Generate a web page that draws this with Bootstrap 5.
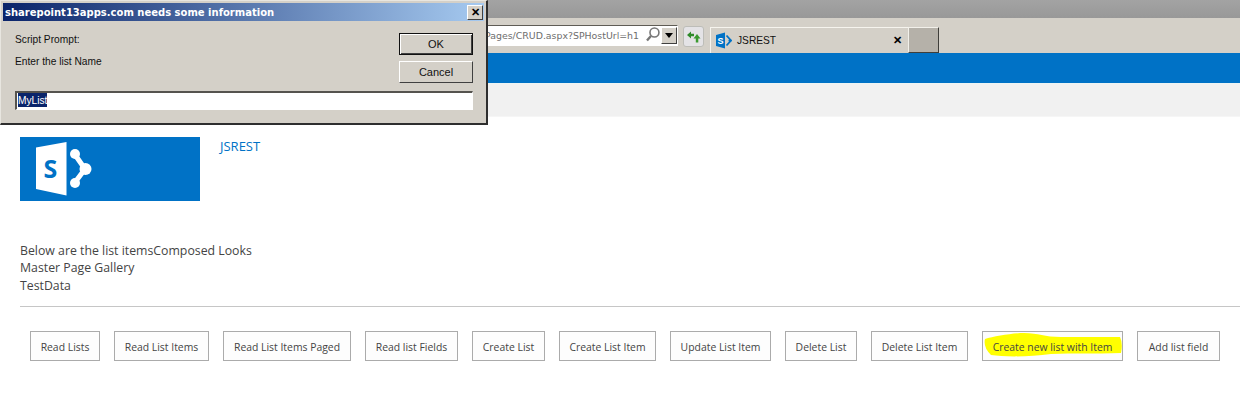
<!DOCTYPE html>
<html lang="en"><head><meta charset="utf-8"><title>JSREST</title>
<link href="https://cdn.jsdelivr.net/npm/bootstrap@5.3.0/dist/css/bootstrap.min.css" rel="stylesheet">
<style>
html,body{height:412px;overflow:hidden}
body{background:#fff;font-family:"Open Sans","Liberation Sans",sans-serif;color:#444;position:relative}
.chrome-top{height:18px;background:linear-gradient(#a3a3a3,#989898)}
.chrome-bar{height:35px;background:#d4d0c8;padding-left:400px;font-family:"Liberation Sans",sans-serif}
.addr{width:278px;height:21px;margin-top:7px;background:#fff;border:1px solid;border-color:#5f5c55 #fff #fff #5f5c55;color:#6d6d6d;padding-left:84px;white-space:nowrap}
.addr-text{width:161px;line-height:19px;font-family:"DejaVu Sans",sans-serif;font-size:9.400px}
.addr-drop{width:16px;height:17px;margin-left:auto;margin-top:1px;background:#d4d0c8;border:1px solid;border-color:#fff #404040 #404040 #fff}
.refresh{width:21px;height:21px;margin:8px 6px 0 5px;background:#e4e3e6;border:1px solid #bdbdb8;border-radius:3px}
.ietab{width:198px;height:26px;margin-top:9px;border-top:1px solid #f6f4ee;border-left:1px solid #f6f4ee;font-size:10.200px;color:#111;padding:0 5px 0 4px}
.ietab-x{font-weight:700;font-size:11px;line-height:1;margin-left:auto;margin-right:1px;color:#000}
.ietab-new{width:31px;height:26px;margin:9px 0 0 0;background:#b5b1a9;border:1px solid;border-color:#f2f0ea #3f3e3a #3f3e3a #f2f0ea}
.fav{margin-right:5px;flex:none}
.sp-blue{height:30px;background:#0072c6}
.sp-gray{height:34px;background:#f1f1f1;border-top:1px solid #ecf4f4;border-bottom:1px solid #f6f6f6}
.sp-head{padding:20px 0 0 20px;gap:20px}
.sp-logo{display:block;width:180px;height:64px;background:#0072c6}
.sp-title{font-size:13px;color:#0072c6;text-decoration:none;line-height:18px;display:block;height:18px}
.sp-list{margin:40.800px 0 0 20px;font-size:12.300px;line-height:17.500px;color:#444}
.sp-rule{margin:11.700px 0 0 20px;border:0;border-top:1px solid #c6c6c6;opacity:1}
.sp-actions{gap:14px;padding:24px 0 0 30px}
.sp-btn{border:1px solid #ababab;border-radius:0;background:#fdfdfd;color:#444;font-size:10.400px;line-height:14px;height:30px;padding:2px 0 0;font-family:"Open Sans",sans-serif;position:relative;white-space:nowrap;flex:none}
.w70{width:70px}.w95{width:95px}.w128{width:128px}.w93{width:93px}.w73{width:73px}.w97{width:97px}.w101{width:101px}.w72{width:72px}.w141{width:141px}.w83{width:83px}
.btn-label{position:relative}
.marker{position:absolute;left:1px;top:1px;width:139px;height:24px}
.ie-dialog{position:absolute;left:0;top:0;width:488px;height:125px;background:#d4d0c8;border:1px solid;border-color:#e8e6e0 #2e2e2e #2e2e2e #e8e6e0;border-width:1px 2px 2px 1px;font-family:"Liberation Sans",sans-serif;font-size:10.200px;color:#111}
.ie-title{height:18px;margin:2px 2px 0 2px;background:linear-gradient(90deg,#0a246a,#a6caf0);color:#fff;font:700 10px/19px "DejaVu Sans",sans-serif;padding-left:2px;white-space:nowrap}
.ie-close{width:16px;height:15px;margin:2px 1px 0 auto;background:#d4d0c8;border:1px solid;border-color:#fff #404040 #404040 #fff;color:#000;font:700 11px/12px "Liberation Sans",sans-serif;text-align:center}
.ie-body{padding:0 13px 0 14px}
.ie-labels{padding-top:8px;line-height:22px;width:384px;height:70px}
.ie-btns{gap:6px;padding-top:12px}
.ie-btn{width:74px;height:22px;padding:0;border-radius:0;background:#d4d0c8;color:#111;font-size:11px;line-height:18px;border:1px solid;border-color:#fff #404040 #404040 #fff}
.ie-btn-def{border-color:#111;box-shadow:inset 1px 1px #fff,inset -1px -1px #404040}
.ie-input{height:19px;border:1px solid;border-color:#55534e #fff #fff #55534e;background:#fff;border-top-width:2px;border-left-width:2px;padding-left:1px;line-height:13px}
.ie-sel{background:#0a246a;color:#fff;display:inline-block;line-height:13px;padding-top:1px}
</style></head>
<body>
<div class="chrome-top"></div>
<div class="chrome-bar d-flex align-items-start">
  <div class="addr d-flex"><span class="addr-text">Pages/CRUD.aspx?SPHostUrl=h1</span>
    <svg width="16" height="16" viewBox="0 0 16 16"><circle cx="9.500" cy="6.500" r="4.500" fill="none" stroke="#777" stroke-width="1.600"/><path d="M6 10L2 14.500" stroke="#777" stroke-width="2.400"/></svg>
    <span class="addr-drop d-flex align-items-center justify-content-center"><svg width="8" height="5" viewBox="0 0 8 5"><path d="M0 0h8L4 5z" fill="#000"/></svg></span>
  </div>
  <div class="refresh d-flex align-items-center justify-content-center"><svg width="19" height="19" viewBox="0 0 19 19"><path d="M3 8L7 4.500V6.800H10V9.200H7V11.500z" fill="#2f8a2a"/><path d="M13 7L16.500 11.500H14.300V15.500H11.800V11.500H9.500z" fill="#3a9a30"/></svg></div>
  <div class="ietab d-flex align-items-center">
    <svg width="17" height="17" viewBox="0 0 17 17" class="fav"><path d="M1 3l9-2.500v16L1 14z" fill="#0072c6"/><text x="5.500" y="11.500" font-family="Liberation Sans" font-weight="700" font-size="9" fill="#fff" text-anchor="middle">S</text><path d="M11.500 3.500l4.500 5-4.500 5" fill="none" stroke="#0072c6" stroke-width="1.800"/><circle cx="15" cy="8.500" r="1.500" fill="#0072c6"/></svg>
    <span>JSREST</span><span class="ietab-x">✕</span>
  </div>
  <div class="ietab-new"></div>
</div>
<div class="sp-blue"></div>
<div class="sp-gray"></div>
<div class="sp-head d-flex align-items-start">
  <svg class="sp-logo" viewBox="0 0 180 64"><path d="M16 10.500L46.500 5v53.500L16 52z" fill="#fff"/><text x="30.500" y="41" font-family="Open Sans" font-weight="700" font-size="25" fill="#0072c6" text-anchor="middle">S</text><path d="M54.500 17L65 32L54.500 46" fill="none" stroke="#fff" stroke-width="5" stroke-linejoin="round"/><circle cx="55" cy="17" r="5" fill="#fff"/><circle cx="65.500" cy="32" r="6" fill="#fff"/><circle cx="55" cy="46" r="5" fill="#fff"/></svg>
  <a class="sp-title" href="#">JSREST</a>
</div>
<div class="sp-list">Below are the list itemsComposed Looks<br>Master Page Gallery<br>TestData</div>
<hr class="sp-rule">
<div class="sp-actions d-flex">
  <button class="btn sp-btn w70">Read Lists</button>
  <button class="btn sp-btn w95">Read List Items</button>
  <button class="btn sp-btn w128">Read List Items Paged</button>
  <button class="btn sp-btn w93">Read list Fields</button>
  <button class="btn sp-btn w73">Create List</button>
  <button class="btn sp-btn w97">Create List Item</button>
  <button class="btn sp-btn w101">Update List Item</button>
  <button class="btn sp-btn w72">Delete List</button>
  <button class="btn sp-btn w97">Delete List Item</button>
  <button class="btn sp-btn w141"><svg class="marker" viewBox="0 0 139 24" preserveAspectRatio="none"><path d="M1 6C10 3 30 0 40 0C55 0 60 4 77 4L136 4Q139 10 137 20C110 21 90 20 67 21C45 24 20 24 7 22Q-1 14 1 6z" fill="#ffff00"/></svg><span class="btn-label">Create new list with Item</span></button>
  <button class="btn sp-btn w83">Add list field</button>
</div>
<div class="ie-dialog">
  <div class="ie-title d-flex"><span>sharepoint13apps.com needs some information</span><span class="ie-close">✕</span></div>
  <div class="ie-body">
    <div class="d-flex justify-content-between">
      <div class="ie-labels"><div>Script Prompt:</div><div>Enter the list Name</div></div>
      <div class="ie-btns d-flex flex-column"><button class="btn ie-btn ie-btn-def">OK</button><button class="btn ie-btn">Cancel</button></div>
    </div>
    <div class="ie-input"><span class="ie-sel">MyList</span></div>
  </div>
</div>
<script src="https://cdn.jsdelivr.net/npm/bootstrap@5.3.0/dist/js/bootstrap.bundle.min.js"></script>
</body></html>
